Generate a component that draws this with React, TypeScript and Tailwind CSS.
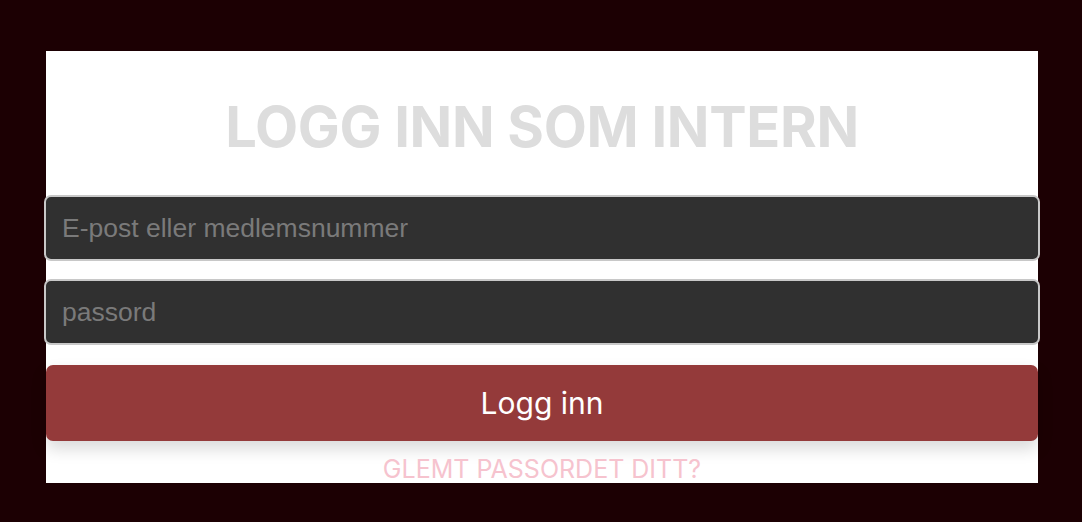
export default function App() {
  return (
    <div className="min-h-[522px] w-full bg-[#1c0003] pt-[51px] pl-[46px]">
      <div className="w-[992px] h-[432px] bg-white flex flex-col">
        <h1 className="pt-[42px] h-[145px] text-center text-[56px] leading-[68px] font-bold tracking-[-0.3px] text-[#dddddd] font-['Inter',sans-serif]">
          LOGG INN SOM INTERN
        </h1>
        <form className="flex flex-col -mx-[2px]" onSubmit={(e) => e.preventDefault()}>
          <input
            type="text"
            placeholder="E-post eller medlemsnummer"
            className="h-[66px] rounded-[7px] border-2 border-[#c8c8c8] bg-[#303030] px-[16px] text-[26.5px] text-white placeholder:text-[#7a7a7a] font-['Liberation_Sans',sans-serif] outline-none"
          />
          <input
            type="password"
            placeholder="passord"
            className="mt-[18px] h-[66px] rounded-[7px] border-2 border-[#c8c8c8] bg-[#303030] px-[16px] text-[26.5px] text-white placeholder:text-[#7a7a7a] font-['Liberation_Sans',sans-serif] outline-none"
          />
          <button
            type="submit"
            className="mx-[2px] mt-[20px] h-[76px] rounded-[7px] bg-[#943a3a] text-white text-[30px] font-['Inter',sans-serif] shadow-[0_8px_16px_rgba(0,0,0,0.15)]"
          >
            Logg inn
          </button>
        </form>
        <a href="#" className="mt-[14px] text-center text-[25px] leading-[28px] text-[#f6c3ce] font-['Inter',sans-serif]">
          GLEMT PASSORDET DITT?
        </a>
      </div>
    </div>
  );
}
